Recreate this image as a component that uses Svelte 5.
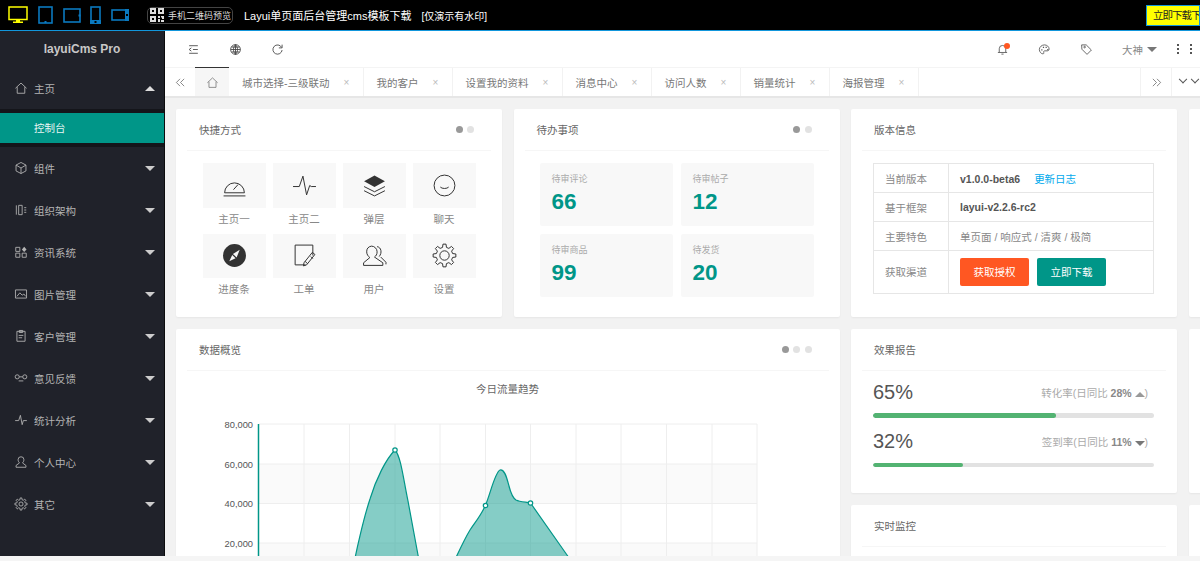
<script>
  // builds a toothed outline for the settings icons
  function gear(cx, cy, ro, ri, n) {
    let pts = [];
    const step = (Math.PI * 2) / n;
    for (let i = 0; i < n; i++) {
      const a = i * step;
      const w = step * 0.17;
      pts.push([ri, a - step * 0.3], [ro, a - w], [ro, a + w], [ri, a + step * 0.3]);
    }
    const d = pts.map(([r, a], i) => `${i ? 'L' : 'M'}${(cx + r * Math.cos(a)).toFixed(2)} ${(cy + r * Math.sin(a)).toFixed(2)}`);
    return d.join(' ') + ' Z';
  }

  const icons = {
    home: { d: 'M2.5 12.5 12 3.5l9.5 9M5.5 10.5V21h13V10.5' },
    cube: { d: 'M12 2.5 20.5 7v10L12 21.5 3.5 17V7ZM3.5 7 12 12l8.5-5M12 12v9.5' },
    org: { d: 'M4 4v16M8 4h6v16H8ZM17.5 8H21M17.5 12H21M17.5 16H21' },
    news: { d: 'M3 4h7v7H3ZM3 14h7v7H3ZM14 14h7v7h-7Z', f: 'M17.5 3l4 4.5-4 4.5-4-4.5Z' },
    image: { d: 'M2.5 5h19v14h-19ZM5 16l5-6 4 4 3-2 3 4' },
    client: { d: 'M5 4h14v17H5ZM9 2.5h6V6H9ZM8 11h8M8 15h6' },
    link: { d: 'M2 10a3.5 3.5 0 1 0 7 0 3.5 3.5 0 1 0-7 0M15 10a3.5 3.5 0 1 0 7 0 3.5 3.5 0 1 0-7 0M9 10h6M8 17h8' },
    pulse: { d: 'M2 13h6l3-9 3 16 2-7h6' },
    user: { d: 'M12 3a5 5 0 0 1 5 5c0 3-1.500 4.500-2.500 5.500l6 4.500v3h-17v-3l6-4.500C8.500 12.500 7 11 7 8a5 5 0 0 1 5-5Z' },
    gear: { d: gear(12, 12, 10.5, 7.5, 8) + ' M8.500 12a3.500 3.500 0 1 0 7 0 3.500 3.500 0 1 0-7 0' },
    fold: { d: 'M4 5h16M11 12h9M4 19h16M8 9l-4 3 4 3' },
    globe: { d: 'M3 12a9 9 0 1 0 18 0 9 9 0 1 0-18 0M3 12h18M4.500 7.500h15M4.500 16.500h15M12 3c-5 5-5 13 0 18M12 3c5 5 5 13 0 18M12 3v18' },
    refresh: { d: 'M19.500 8A8.500 8.500 0 1 0 20.500 13M20.500 3v6h-6' },
    bell: { d: 'M6 17V10.500a6 6 0 0 1 12 0V17M3.500 17.500h17M10 20.500h4' },
    palette: { d: 'M12 3.500c-5 0-9.500 3.800-9.500 8.500 0 4.500 3.500 8 6.500 8 2 0 2-1.500 1.500-2.800-.5-1.500.5-2.700 2-2.700h4.500c2 0 3.500-1.200 3.500-3.500 0-4-3.800-7.500-8.500-7.500Z', f: 'M6 11.500h2.200v2.200H6ZM9 7h2.200v2.200H9ZM14 7h2.200v2.200H14ZM17 11h2.200v2.200H17Z' },
    tag: { d: 'M3 3.500h8.500L21 13l-8 8-9.500-9.500ZM7 7.500a1.500 1.500 0 1 0 3 0 1.500 1.500 0 1 0-3 0' },
    prev: { d: 'M11 4l-8 8 8 8M20 4l-8 8 8 8' },
    next: { d: 'M4 4l8 8-8 8M13 4l8 8-8 8' },
    gauge: { d: 'M2.500 19a9.500 9.500 0 0 1 19 0ZM1.500 22h21M11 16l4.500-5' },
    wave: { d: 'M1 13h6l3.500-10 3.500 18 3-9 1.500 1H23' },
    layers: { d: 'M2 13l10 5 10-5M2 17l10 5 10-5', f: 'M12 2.500 22 8l-10 5.500L2 8Z' },
    chat: { d: 'M12 2a10 10 0 1 0 0 20 10 10 0 1 0 0-20M8 13.500c1.500 1.800 6.500 1.800 8 0' },
    compass: { f: 'M12 1a11 11 0 1 0 0 22 11 11 0 1 0 0-22Z', w: 'M17 6.500 14 14l-3.500-3.500ZM7 17.500 9.800 11.500l3.200 3.200Z' },
    ticket: { d: 'M20 12V2H3v19h10M22 11l-8 10-3 1 .5-3 8-10ZM15 20l-2.500-2.500M18 13l2 2' },
    users: { d: 'M9 3a5.500 5.500 0 0 1 5.500 5.500c0 2.500-1 3.800-2.500 5l8 5.500v2.500H1.500V19l6-5C6 12.800 4.500 11 4.500 8.500A5.500 5.500 0 0 1 9 3ZM14.500 3.500c4 .5 5 6 2 9.500M18 13.500l5 5v2' },
    bigGear: { d: gear(12, 12, 11, 8, 8) + ' M7.500 12a4.500 4.500 0 1 0 9 0 4.500 4.500 0 1 0-9 0' }
  };

  const menu = [
    { name: '主页', icon: 'home', open: true },
    { name: '组件', icon: 'cube' },
    { name: '组织架构', icon: 'org' },
    { name: '资讯系统', icon: 'news' },
    { name: '图片管理', icon: 'image' },
    { name: '客户管理', icon: 'client' },
    { name: '意见反馈', icon: 'link' },
    { name: '统计分析', icon: 'pulse' },
    { name: '个人中心', icon: 'user' },
    { name: '其它', icon: 'gear' }
  ];

  const tabs = ['城市选择-三级联动', '我的客户', '设置我的资料', '消息中心', '访问人数', '销量统计', '海报管理'];

  const shortcuts = [
    { name: '主页一', icon: 'gauge' },
    { name: '主页二', icon: 'wave' },
    { name: '弹层', icon: 'layers' },
    { name: '聊天', icon: 'chat' },
    { name: '进度条', icon: 'compass' },
    { name: '工单', icon: 'ticket' },
    { name: '用户', icon: 'users' },
    { name: '设置', icon: 'bigGear' }
  ];

  const todos = [
    { label: '待审评论', value: 66 },
    { label: '待审帖子', value: 12 },
    { label: '待审商品', value: 99 },
    { label: '待发货', value: 20 }
  ];

  const reports = [
    { pct: 65, label: '转化率', diff: '28%', up: true },
    { pct: 32, label: '签到率', diff: '11%', up: false }
  ];

  const axis = [
    { y: 425, text: '80,000' },
    { y: 465, text: '60,000' },
    { y: 504.5, text: '40,000' },
    { y: 544, text: '20,000' }
  ];
  const columns = [304, 349.5, 395, 440, 485.5, 530.5, 576, 621, 666.500, 712, 757];
</script>

{#snippet icon(name, cls = '')}
  <svg class="ico {cls}" viewBox="0 0 24 24">
    {#if icons[name].d}<path d={icons[name].d} />{/if}
    {#if icons[name].f}<path class="solid" d={icons[name].f} />{/if}
    {#if icons[name].w}<path class="knock" d={icons[name].w} />{/if}
  </svg>
{/snippet}

{#snippet dots(n)}
  <span class="dots">
    {#each Array(n) as _, i}
      <i class:on={i === 0}></i>
    {/each}
  </span>
{/snippet}

<div class="page">
  <div class="topbar">
    <div class="devices">
      <svg width="20" height="18" viewBox="0 0 20 18" class="yellow">
        <rect x="1" y="1" width="18" height="12.500" fill="none" stroke="currentColor" stroke-width="1.500" />
        <path d="M8 13.500h4v2h3v1.500H5v-1.500h3Z" fill="currentColor" />
      </svg>
      <svg width="15" height="18" viewBox="0 0 15 18">
        <rect x="1" y="1" width="13" height="16" fill="none" stroke="currentColor" stroke-width="1.600" />
        <rect x="6.500" y="15" width="2" height="2" fill="currentColor" />
      </svg>
      <svg width="18" height="15" viewBox="0 0 18 15">
        <rect x="1" y="1" width="16" height="13" fill="none" stroke="currentColor" stroke-width="1.600" />
        <rect x="15.500" y="6.500" width="2" height="2" fill="currentColor" />
      </svg>
      <svg width="11" height="18" viewBox="0 0 11 18">
        <rect x="1" y="1" width="9" height="16" fill="none" stroke="currentColor" stroke-width="1.600" />
        <rect x="0" y="14" width="11" height="4" fill="currentColor" />
        <rect x="4.500" y="15" width="2" height="2" fill="#000" />
      </svg>
      <svg width="18" height="12" viewBox="0 0 18 12">
        <rect x="1" y="1" width="16" height="10" fill="none" stroke="currentColor" stroke-width="1.600" />
        <rect x="14" y="0" width="4" height="12" fill="currentColor" />
        <rect x="15" y="5" width="2" height="2" fill="#000" />
      </svg>
    </div>
    <div class="qr">
      <svg width="14" height="14" viewBox="0 0 14 14" fill="#ddd">
        <path d="M0 0h6v6H0ZM2 2v2h2V2ZM8 0h6v6H8ZM10 2v2h2V2ZM0 8h6v6H0ZM2 10v2h2v-2ZM8 8h2v2H8ZM11 8h3v3h-2V9.500h-1ZM8 11h2v3H8ZM11 12h3v2h-3Z" fill-rule="evenodd" />
      </svg>
      <span>手机二维码预览</span>
    </div>
    <span class="site-title">Layui单页面后台管理cms模板下载</span>
    <span class="watermark">[仅演示有水印]</span>
    <a class="get" href="#top">立即下载下载</a>
  </div>

  <div class="shell">
    <aside class="side">
      <div class="logo">layuiCms Pro</div>
      <nav>
        {#each menu as item}
          <div class="nav-item">
            {@render icon(item.icon, 'nav-ico')}
            <span>{item.name}</span>
            <i class="caret" class:up={item.open}></i>
          </div>
          {#if item.open}
            <div class="sub"><div class="sub-item">控制台</div></div>
          {/if}
        {/each}
      </nav>
    </aside>

    <div class="main">
      <header class="head">
        <div class="head-group">
          <div class="head-btn">{@render icon('fold')}</div>
          <div class="head-btn">{@render icon('globe')}</div>
          <div class="head-btn">{@render icon('refresh')}</div>
        </div>
        <div class="head-group right">
          <div class="head-btn bell">{@render icon('bell')}<b></b></div>
          <div class="head-btn">{@render icon('palette')}</div>
          <div class="head-btn">{@render icon('tag')}</div>
          <div class="head-user">大神<i class="caret grey"></i></div>
          <div class="head-more">
            <span class="vdots"><i></i><i></i><i></i></span>
            <span class="vdots"><i></i><i></i><i></i></span>
          </div>
        </div>
      </header>

      <div class="tabbar">
        <div class="tab-nav">{@render icon('prev')}</div>
        <div class="tab-home">{@render icon('home')}</div>
        {#each tabs as t}
          <div class="tab"><span>{t}</span><em>×</em></div>
        {/each}
        <div class="tab-nav end">{@render icon('next')}</div>
        <div class="tab-down"><i></i><i></i></div>
      </div>

      <div class="content">
        <div class="grid">
          <section class="card">
            <div class="card-head"><span>快捷方式</span>{@render dots(2)}</div>
            <div class="shortcuts">
              {#each shortcuts as s}
                <div class="shortcut">
                  <div class="tile">{@render icon(s.icon)}</div>
                  <span>{s.name}</span>
                </div>
              {/each}
            </div>
          </section>

          <section class="card">
            <div class="card-head"><span>待办事项</span>{@render dots(2)}</div>
            <div class="todos">
              {#each todos as t}
                <div class="todo">
                  <span>{t.label}</span>
                  <strong>{t.value}</strong>
                </div>
              {/each}
            </div>
          </section>

          <section class="card">
            <div class="card-head"><span>版本信息</span></div>
            <table class="info">
              <tbody>
                <tr><td>当前版本</td><td><b>v1.0.0-beta6</b><a href="#top">更新日志</a></td></tr>
                <tr><td>基于框架</td><td><b>layui-v2.2.6-rc2</b></td></tr>
                <tr><td>主要特色</td><td>单页面 / 响应式 / 清爽 / 极简</td></tr>
                <tr class="last">
                  <td>获取渠道</td>
                  <td>
                    <div class="btns">
                      <button class="orange">获取授权</button>
                      <button class="teal">立即下载</button>
                    </div>
                  </td>
                </tr>
              </tbody>
            </table>
          </section>

          <section class="card"></section>

          <section class="card wide">
            <div class="card-head"><span>数据概览</span>{@render dots(3)}</div>
            <svg class="chart" viewBox="187 372 641 190" width="641" height="190">
              <text class="chart-title" x="507.500" y="394" text-anchor="middle">今日流量趋势</text>
              <rect x="259" y="465" width="498" height="39.500" fill="#fafafa" />
              <rect x="259" y="544" width="498" height="40" fill="#fafafa" />
              {#each axis as a}
                <line x1="259" x2="757" y1={a.y} y2={a.y} class="grid-line" />
                <text class="tick" x="253" y={a.y + 3.500} text-anchor="end">{a.text}</text>
              {/each}
              {#each columns as x}
                <line x1={x} x2={x} y1="425" y2="600" class="grid-line" />
              {/each}
              <path class="area" d="M352 575C356 552 364 518 370 500C376 480 386 460 395 451C401 458 403 478 408 502L418 556L424 585Z" />
              <path class="area" d="M448 575C452 568 462 544 470 531C476 522 482 515 485.500 506C490 496 495 473 500 471C505 470 507 480 509 487C511 495 513 499 516 501C520 503 526 503 530.500 504L567 556L580 575Z" />
              <line x1="258.500" x2="258.500" y1="425" y2="600" stroke="#009688" stroke-width="1.500" />
              <circle class="pt" cx="395" cy="451" r="2.200" />
              <circle class="pt" cx="485.500" cy="506.500" r="2.200" />
              <circle class="pt" cx="530.500" cy="504" r="2.200" />
            </svg>
          </section>

          <div class="stack">
            <section class="card report">
              <div class="card-head"><span>效果报告</span></div>
              <div class="reports">
                {#each reports as r}
                  <div class="report-row">
                    <div class="report-top">
                      <span class="pct">{r.pct}%</span>
                      <span class="rate">{r.label}(日同比 <b>{r.diff}</b> <i class="caret grey" class:up={r.up}></i>)</span>
                    </div>
                    <div class="bar"><div class="fill" style="width: {r.pct}%"></div></div>
                  </div>
                {/each}
              </div>
            </section>
            <section class="card live">
              <div class="card-head"><span>实时监控</span></div>
            </section>
          </div>

          <div class="stack">
            <section class="card report"></section>
            <section class="card live"></section>
          </div>
        </div>
      </div>
    </div>
  </div>
  <div class="foot"></div>
</div>

<style>
  :global(body) {
    font-family: "Liberation Sans", "Noto Sans CJK SC", sans-serif;
    font-size: 10.5px;
    color: #666;
  }

  .page {
    height: 561px;
    display: flex;
    flex-direction: column;
    overflow: hidden;
    background: #f2f2f2;
  }

  .ico {
    width: 14px;
    height: 14px;
    fill: none;
    stroke: currentColor;
    stroke-width: 1.500;
    stroke-linejoin: round;
    flex: none;
  }
  .ico .solid {
    fill: currentColor;
    stroke: none;
  }
  .ico .knock {
    fill: #f8f8f8;
    stroke: none;
  }

  .caret {
    display: inline-block;
    width: 0;
    height: 0;
    border: 5px solid transparent;
    border-top: 5px solid #ccc;
    border-bottom: 0;
  }
  .caret.up {
    border-top: 0;
    border-bottom: 5px solid #ddd;
  }
  .caret.grey {
    border-top-color: #777;
  }
  .caret.grey.up {
    border-top-color: transparent;
    border-bottom-color: #999;
  }

  /* top strip */
  .topbar {
    height: 30px;
    flex: none;
    background: #000;
    border-bottom: 1px solid #1296db;
    display: flex;
    align-items: center;
    color: #fff;
  }
  .devices {
    display: flex;
    align-items: center;
    color: #0a79bf;
    padding-left: 8px;
    width: 139px;
    gap: 0;
    justify-content: space-between;
    padding-right: 10px;
    box-sizing: border-box;
  }
  .yellow {
    color: #ff0;
  }
  .qr {
    height: 17px;
    width: 86px;
    border: 1px solid #444;
    border-radius: 5px;
    box-sizing: border-box;
    display: flex;
    align-items: center;
    gap: 4px;
    padding-left: 2px;
    margin-left: 8px;
    font-size: 9px;
    color: #ddd;
    white-space: nowrap;
    flex: none;
  }
  .site-title {
    margin-left: 11px;
    font-size: 11px;
    white-space: nowrap;
  }
  .watermark {
    margin-left: 10px;
    font-size: 10px;
    white-space: nowrap;
  }
  .get {
    margin-left: auto;
    width: 54px;
    height: 21px;
    flex: none;
    box-sizing: border-box;
    background: #ff0;
    border: 1px solid #1296db;
    color: #222;
    text-decoration: none;
    font-size: 10.500px;
    line-height: 19px;
    padding-left: 6px;
    white-space: nowrap;
    overflow: hidden;
    letter-spacing: -1px;
  }

  /* sidebar */
  .shell {
    flex: 1;
    min-height: 0;
    display: flex;
  }
  .side {
    width: 165px;
    flex: none;
    background: #20222a;
    border-right: 1px solid #0c0c0e;
    box-sizing: border-box;
    color: #b4b4b4;
  }
  .logo {
    height: 36px;
    line-height: 36px;
    text-align: center;
    font-size: 12px;
    font-weight: bold;
    color: #c8c8c8;
  }
  .nav-item {
    height: 42px;
    display: flex;
    align-items: center;
    padding: 0 9px 0 14px;
  }
  .nav-item span {
    margin-left: 6px;
    flex: 1;
  }
  .sub {
    background: #14151a;
    padding: 4px 0;
  }
  .sub-item {
    height: 30px;
    line-height: 30px;
    padding-left: 34px;
    background: #009688;
    color: #e8f5f3;
  }

  /* main column */
  .main {
    flex: 1;
    min-width: 0;
    display: flex;
    flex-direction: column;
  }
  .head {
    height: 36px;
    flex: none;
    background: #fff;
    display: flex;
    justify-content: space-between;
    color: #444;
  }
  .head-group {
    display: flex;
    padding-left: 7px;
  }
  .head-group.right {
    padding-left: 0;
    color: #555;
  }
  .head-btn {
    width: 42px;
    display: flex;
    align-items: center;
    justify-content: center;
    position: relative;
  }
  .head-btn .ico {
    width: 13px;
    height: 13px;
    stroke-width: 1.600;
  }
  .bell b {
    position: absolute;
    left: 23px;
    top: 12px;
    width: 6px;
    height: 6px;
    border-radius: 50%;
    background: #ff5722;
  }
  .head-user {
    width: 58px;
    display: flex;
    align-items: center;
    padding-left: 15px;
    box-sizing: border-box;
    gap: 4px;
    color: #888;
  }
  .head-more {
    width: 35px;
    display: flex;
    align-items: center;
    gap: 11px;
    padding-left: 12px;
    box-sizing: border-box;
  }
  .vdots {
    display: flex;
    flex-direction: column;
    gap: 2px;
  }
  .vdots i {
    width: 2px;
    height: 2px;
    background: #555;
  }

  /* tabs */
  .tabbar {
    height: 31px;
    flex: none;
    box-sizing: border-box;
    background: #fff;
    border-top: 1px solid #f4f4f4;
    border-bottom: 2px solid #e6e6e6;
    display: flex;
    color: #777;
  }
  .tab-nav {
    width: 30px;
    display: flex;
    align-items: center;
    justify-content: center;
    color: #555;
    flex: none;
  }
  .tab-nav .ico {
    width: 11px;
    height: 11px;
  }
  .tab-nav.end {
    margin-left: auto;
    border-left: 1px solid #f2f2f2;
  }
  .tab-home {
    width: 34px;
    background: #f6f6f6;
    border-top: 1px solid #333;
    margin-top: -1px;
    display: flex;
    align-items: center;
    justify-content: center;
    color: #666;
    flex: none;
  }
  .tab-home .ico {
    width: 13px;
    height: 13px;
    stroke-width: 1.300;
  }
  .tab {
    display: flex;
    align-items: center;
    padding: 0 12px 0 13px;
    gap: 14px;
    border-right: 1px solid #f2f2f2;
    white-space: nowrap;
    flex: none;
  }
  .tab em {
    font-style: normal;
    font-size: 10px;
    color: #bbb;
    width: 7px;
  }
  .tab-down {
    width: 29px;
    border-left: 1px solid #f2f2f2;
    display: flex;
    align-items: center;
    gap: 6px;
    padding-left: 8px;
    box-sizing: border-box;
    overflow: hidden;
    flex: none;
  }
  .tab-down i {
    width: 5px;
    height: 5px;
    flex: none;
    border-right: 1px solid #555;
    border-bottom: 1px solid #555;
    transform: rotate(45deg) translate(-2px, -2px);
  }

  /* dashboard */
  .content {
    flex: 1;
    min-height: 0;
    overflow: hidden;
    padding: 11px 0 0 11px;
  }
  .grid {
    display: grid;
    grid-template-columns: repeat(4, 326px);
    grid-template-rows: 208px 420px;
    gap: 12px 11.500px;
  }
  .card {
    background: #fff;
    border-radius: 2px;
    box-shadow: 0 1px 2px rgba(0, 0, 0, 0.05);
  }
  .wide {
    grid-column: span 2;
  }
  .stack {
    display: flex;
    flex-direction: column;
    gap: 12px;
  }
  .report {
    height: 164px;
    flex: none;
  }
  .live {
    flex: 1;
  }
  .card-head {
    height: 42px;
    margin: 0 11px;
    padding: 0 17px 0 12px;
    border-bottom: 1px solid #f6f6f6;
    box-sizing: border-box;
    display: flex;
    align-items: center;
    justify-content: space-between;
  }
  .dots {
    display: flex;
    gap: 4.500px;
  }
  .dots i {
    width: 7px;
    height: 7px;
    border-radius: 50%;
    background: #e2e2e2;
  }
  .dots i.on {
    background: #999;
  }

  .shortcuts {
    display: grid;
    grid-template-columns: repeat(4, 63px);
    gap: 7px;
    padding: 12px 0 0 26.500px;
  }
  .shortcut {
    display: flex;
    flex-direction: column;
    align-items: center;
    color: #888;
  }
  .tile {
    width: 63px;
    height: 44.500px;
    background: #f8f8f8;
    display: flex;
    align-items: center;
    justify-content: center;
    color: #333;
    margin-bottom: 4px;
  }
  .tile .ico {
    width: 25px;
    height: 25px;
    stroke-width: 0.950;
  }
  .shortcut > span {
    height: 15px;
    line-height: 15px;
  }

  .todos {
    display: grid;
    grid-template-columns: repeat(2, 133px);
    gap: 8px;
    padding: 12px 0 0 26px;
  }
  .todo {
    height: 63px;
    background: #f8f8f8;
    border-radius: 2px;
    padding: 10px 12px 0;
    box-sizing: border-box;
    font-size: 9px;
    color: #aaa;
    display: flex;
    flex-direction: column;
  }
  .todo span {
    line-height: 13px;
  }
  .todo strong {
    font-size: 22.500px;
    line-height: 26px;
    margin-top: 3px;
    color: #009688;
  }

  .info {
    margin: 12px 0 0 22px;
    width: 281px;
    border-collapse: collapse;
  }
  .info td {
    border: 1px solid #e6e6e6;
    height: 29px;
    padding: 0 11px;
    box-sizing: border-box;
    color: #888;
  }
  .info td:first-child {
    width: 75px;
  }
  .info b {
    color: #555;
  }
  .info a {
    margin-left: 14px;
    color: #01aaed;
    text-decoration: none;
  }
  .info .last td {
    height: 42.500px;
  }
  .btns {
    display: flex;
    gap: 8px;
  }
  button {
    width: 69px;
    height: 28px;
    border: 0;
    border-radius: 2px;
    color: #fff;
    font: inherit;
    padding: 0;
  }
  .orange {
    background: #ff5722;
  }
  .teal {
    background: #009688;
  }

  .chart {
    display: block;
    margin: 0 0 0 11px;
  }
  .chart-title {
    font-size: 10.500px;
    fill: #666;
  }
  .tick {
    font-size: 9.300px;
    fill: #555;
  }
  .grid-line {
    stroke: #eee;
    stroke-width: 1;
  }
  .area {
    fill: rgba(0, 150, 136, 0.48);
    stroke: #009688;
    stroke-width: 1.200;
  }
  .pt {
    fill: #fff;
    stroke: #009688;
    stroke-width: 1.200;
  }

  .reports {
    padding: 0 23px 0 22px;
  }
  .report-row {
    height: 49.500px;
  }
  .report-top {
    height: 42px;
    display: flex;
    align-items: center;
    justify-content: space-between;
    padding-right: 6px;
  }
  .pct {
    font-size: 20px;
    color: #555;
  }
  .rate {
    color: #aaa;
  }
  .rate b {
    color: #888;
    font-weight: bold;
  }
  .bar {
    height: 4.500px;
    background: #e2e2e2;
    border-radius: 3px;
    overflow: hidden;
  }
  .fill {
    height: 100%;
    background: #53b372;
    border-radius: 3px;
  }

  .foot {
    height: 5px;
    flex: none;
    background: #f5f5f5;
  }
</style>
